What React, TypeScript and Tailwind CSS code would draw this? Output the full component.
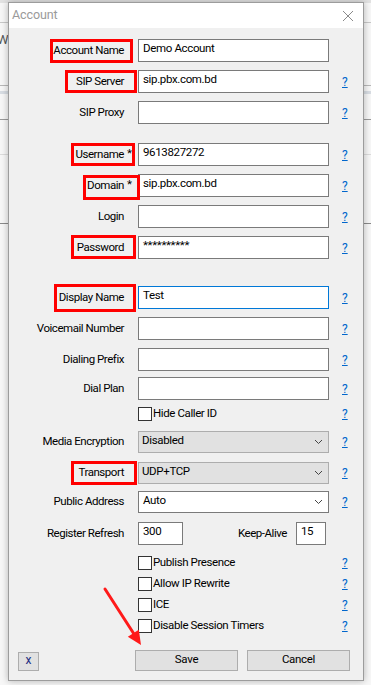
import React from "react";

const font = { fontFamily: "Roboto, 'Liberation Sans', Arial, sans-serif" };

function Help() {
  return <span className="ml-[13px] text-[12px] leading-none text-[#0066cc] underline">?</span>;
}

function Label({ children }: { children: React.ReactNode }) {
  return <div className="w-[115px] shrink-0 text-right text-[11.5px] tracking-[-0.45px] text-black whitespace-nowrap">{children}</div>;
}

function Gap({ star }: { star?: boolean }) {
  return (
    <div className="w-[14px] shrink-0 h-full flex items-center pl-[3px] text-[11.5px] text-black">
      {star ? <span className="pb-[2px]">*</span> : null}
    </div>
  );
}

function TextRow({ mt, label, value, help = true, focused = false, star = false }: { mt: string; label: React.ReactNode; value?: string; help?: boolean; focused?: boolean; star?: boolean }) {
  return (
    <div className={`flex items-center ${mt} h-[23px]`}>
      <Label>{label}</Label>
      <Gap star={star} />
      <div className={`w-[191px] h-[23px] bg-white border ${focused ? "border-[#0078d7]" : "border-[#7a7a7a]"} flex items-center pl-[4px] pb-[3px] text-[11.5px] tracking-[-0.35px] text-black`}>{value}</div>
      {help ? <Help /> : null}
    </div>
  );
}

function Chevron() {
  return (
    <svg width="9" height="6" viewBox="0 0 9 6" className="mr-[5px]">
      <polyline points="1,1 4.5,4.5 8,1" fill="none" stroke="#444" strokeWidth="1" />
    </svg>
  );
}

function SelectRow({ mt, label, value, white = false }: { mt: string; label: string; value: string; white?: boolean }) {
  return (
    <div className={`flex items-center ${mt} h-[22px]`}>
      <Label>{label}</Label>
      <Gap />
      <div className={`w-[191px] h-[22px] border ${white ? "bg-white border-[#7a7a7a] pl-[4px]" : "bg-[#e1e1e1] border-[#adadad] pl-[3px]"} flex items-center justify-between text-[11.5px] tracking-[-0.35px] text-black`}>
        <span className="pb-[2px]">{value}</span>
        <Chevron />
      </div>
      <Help />
    </div>
  );
}

function CheckRow({ mt, label }: { mt: string; label: string }) {
  return (
    <div className={`flex items-center ${mt} h-[14px]`}>
      <div className="w-[129px] shrink-0" />
      <div className="w-[191px] flex items-center">
        <div className="w-[14px] h-[14px] shrink-0 bg-white border border-[#333333]" />
        <span className="ml-[1px] text-[11.5px] tracking-[-0.4px] text-black whitespace-nowrap">{label}</span>
      </div>
      <Help />
    </div>
  );
}

function RedBox({ x, y, w, h }: { x: number; y: number; w: number; h: number }) {
  return <div className="absolute border-[3px] border-[#ff0000]" style={{ left: x, top: y, width: w, height: h }} />;
}

export default function App() {
  return (
    <div className="relative w-[371px] h-[685px] overflow-hidden bg-[#f7f7f7]" style={font}>
      {/* background window behind the dialog */}
      <div className="absolute left-0 top-0 w-full h-[3px] bg-[#e2e2e2]" />
      <div className="absolute left-0 top-[22px] w-full h-px bg-[#c8c8c8]" />
      <div className="absolute left-0 top-[85px] w-full h-px bg-[#b8b8b8]" />
      <div className="absolute left-0 top-[91px] w-full h-[3px] bg-[#d8dde3]" />
      <div className="absolute left-0 top-[119px] w-full h-px bg-[#9a9a9a]" />
      <div className="absolute left-0 top-[154px] w-full h-px bg-[#dcdcdc]" />
      <div className="absolute left-0 top-[223px] w-full h-px bg-[#8a8a8a]" />
      <div className="absolute left-[-3px] top-[30px] text-[13px] text-[#555]">W</div>

      {/* dialog window */}
      <div className="absolute left-[8px] top-[2px] w-[356px] h-[679px] border border-[#9c9c9c] bg-[#f0f0f0] shadow-[0_0_7px_rgba(0,0,0,0.28)] flex flex-col">
        <div className="h-[25px] bg-white flex items-center justify-between shrink-0">
          <span className="pl-[3px] text-[12.5px] text-[#9a9a9a] tracking-[-0.1px]">Account</span>
          <svg width="12" height="12" viewBox="0 0 12 12" className="mr-[9px] mt-[1px]">
            <line x1="1" y1="1" x2="11" y2="11" stroke="#8a8a8a" strokeWidth="1" />
            <line x1="11" y1="1" x2="1" y2="11" stroke="#8a8a8a" strokeWidth="1" />
          </svg>
        </div>

        <div className="flex flex-col">
          <TextRow mt="mt-[11px]" label="Account Name" value="Demo Account" help={false} />
          <TextRow mt="mt-[8px]" label="SIP Server" value="sip.pbx.com.bd" />
          <TextRow mt="mt-[8px]" label="SIP Proxy" />
          <TextRow mt="mt-[19px]" label="Username" star value="9613827272" />
          <TextRow mt="mt-[8px]" label="Domain" star value="sip.pbx.com.bd" />
          <TextRow mt="mt-[8px]" label="Login" />
          <TextRow mt="mt-[8px]" label="Password" value="**********" />
          <TextRow mt="mt-[27px]" label="Display Name" value="Test" focused />
          <TextRow mt="mt-[8px]" label="Voicemail Number" />
          <TextRow mt="mt-[8px]" label="Dialing Prefix" />
          <TextRow mt="mt-[6px]" label="Dial Plan" />
          <CheckRow mt="mt-[7px]" label="Hide Caller ID" />
          <SelectRow mt="mt-[10px]" label="Media Encryption" value="Disabled" />
          <SelectRow mt="mt-[9px]" label="Transport" value="UDP+TCP" />
          <SelectRow mt="mt-[7px]" label="Public Address" value="Auto" white />

          <div className="flex items-center mt-[9px] h-[23px]">
            <Label>Register Refresh</Label>
            <Gap />
            <div className="w-[45px] h-[23px] bg-white border border-[#7a7a7a] flex items-center pl-[4px] pb-[3px] text-[11.5px] tracking-[-0.35px] text-black">300</div>
            <div className="w-[104px] text-right text-[11.5px] tracking-[-0.45px] text-black">Keep-Alive</div>
            <div className="ml-[9px] w-[30px] h-[23px] bg-white border border-[#7a7a7a] flex items-center pl-[4px] pb-[3px] text-[11.5px] tracking-[-0.35px] text-black">15</div>
          </div>

          <CheckRow mt="mt-[11px]" label="Publish Presence" />
          <CheckRow mt="mt-[7px]" label="Allow IP Rewrite" />
          <CheckRow mt="mt-[7px]" label="ICE" />
          <CheckRow mt="mt-[7px]" label="Disable Session Timers" />

          <div className="flex items-end mt-[17px] h-[21px]">
            <div className="ml-[9px] w-[21px] h-[19px] bg-[#e1e1e1] border border-[#adadad] flex items-center justify-center pb-[3px] text-[12px] text-[#1a2a80]">x</div>
            <div className="ml-[96px] w-[103px] h-[21px] bg-[#e1e1e1] border border-[#adadad] flex items-center justify-center pb-[1px] text-[11.5px] tracking-[-0.3px] text-black">Save</div>
            <div className="ml-[9px] w-[103px] h-[21px] bg-[#e1e1e1] border border-[#adadad] flex items-center justify-center pb-[1px] text-[11.5px] tracking-[-0.3px] text-black">Cancel</div>
          </div>
        </div>
      </div>

      {/* red annotation boxes */}
      <RedBox x={50} y={39} w={83} h={24} />
      <RedBox x={65} y={70} w={72} h={23} />
      <RedBox x={71} y={143} w={64} h={23} />
      <RedBox x={83} y={175} w={57} h={25} />
      <RedBox x={71} y={235} w={65} h={24} />
      <RedBox x={54} y={284} w={82} h={28} />
      <RedBox x={71} y={461} w={66} h={24} />

      {/* red arrow */}
      <svg className="absolute left-0 top-0" width="371" height="685" viewBox="0 0 371 685">
        <line x1="105" y1="589" x2="134" y2="634" stroke="#ff1a1a" strokeWidth="3" strokeLinecap="round" />
        <polygon points="141,645 127.8,636.8 138.8,629.7" fill="#ff1a1a" />
      </svg>
    </div>
  );
}
